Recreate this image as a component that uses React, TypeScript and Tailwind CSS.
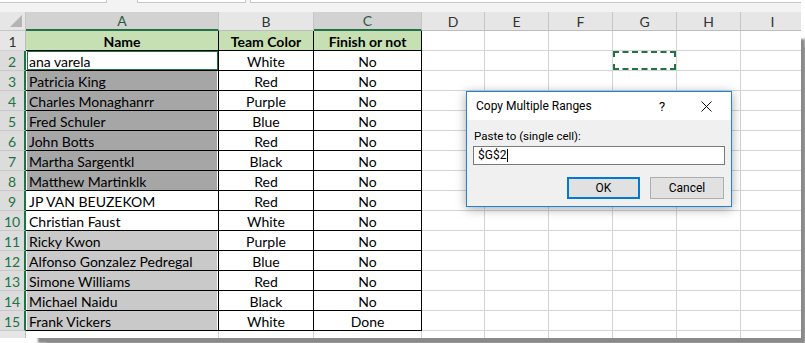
import React from "react";

type Row = { n: number; a: string; b: string; c: string };

const rows: Row[] = [
  { n: 1, a: "Name", b: "Team Color", c: "Finish or not" },
  { n: 2, a: "ana varela", b: "White", c: "No" },
  { n: 3, a: "Patricia King", b: "Red", c: "No" },
  { n: 4, a: "Charles Monaghanrr", b: "Purple", c: "No" },
  { n: 5, a: "Fred Schuler", b: "Blue", c: "No" },
  { n: 6, a: "John Botts", b: "Red", c: "No" },
  { n: 7, a: "Martha Sargentkl", b: "Black", c: "No" },
  { n: 8, a: "Matthew Martinklk", b: "Red", c: "No" },
  { n: 9, a: "JP VAN BEUZEKOM", b: "Red", c: "No" },
  { n: 10, a: "Christian Faust", b: "White", c: "No" },
  { n: 11, a: "Ricky Kwon", b: "Purple", c: "No" },
  { n: 12, a: "Alfonso Gonzalez Pedregal", b: "Blue", c: "No" },
  { n: 13, a: "Simone Williams", b: "Red", c: "No" },
  { n: 14, a: "Michael Naidu", b: "Black", c: "No" },
  { n: 15, a: "Frank Vickers", b: "White", c: "Done" },
];

const gridCols =
  "grid grid-rows-[minmax(0,1fr)] grid-cols-[26px_193px_95px_108px_63px_64px_64px_64px_64px_64px]";

function aFill(n: number): string {
  if (n >= 3 && n <= 8) return "bg-[#a6a6a6]";
  if (n >= 11 && n <= 15) return "bg-[#c9c9c9]";
  return "bg-white";
}

function ColHeader({ label, selected }: { label: string; selected?: boolean }) {
  return (
    <div
      className={
        selected
          ? "flex items-center justify-center bg-[#d2d2d2] text-[#2b5a3c] border-r border-r-[#c6c6c6] border-b-2 border-b-[#217346] text-[14px]"
          : "flex items-center justify-center bg-[#e6e6e6] text-[#333] border-r border-r-[#c6c6c6] border-b border-b-[#bdbdbd] text-[14px]"
      }
    >
      {label}
    </div>
  );
}

function EmptyCell({ marquee }: { marquee?: boolean }) {
  return (
    <div className="border-r border-b border-[#d4d4d4] bg-white relative">
      {marquee && (
        <div className="absolute left-0 top-0 right-0 bottom-0 border-2 border-dashed border-[#217346]" />
      )}
    </div>
  );
}

function DataRow({ r }: { r: Row }) {
  const header = r.n === 1;
  const rowHead = header
    ? "flex items-center justify-center pt-[2px] bg-[#e6e6e6] text-[#333] border-r border-r-[#bdbdbd] border-b border-b-[#d0d0d0] text-[14px]"
    : "flex items-center justify-center pt-[2px] bg-[#dcdcdc] text-[#217346] border-r-2 border-r-[#217346] border-b border-b-[#c8c8c8] text-[14px]";
  return (
    <div className={`${gridCols} h-[20px]`}>
      <div className={rowHead}>{r.n}</div>
      {header ? (
        <>
          <div className="flex items-center justify-center pt-[2px] bg-[#c6e0b4] font-bold border-r border-b border-black">
            {r.a}
          </div>
          <div className="flex items-center justify-center pt-[2px] bg-[#c6e0b4] font-bold border-r border-b border-black">
            {r.b}
          </div>
          <div className="flex items-center justify-center pt-[2px] bg-[#c6e0b4] font-bold border-r border-b border-black">
            {r.c}
          </div>
        </>
      ) : (
        <>
          <div className="border-r border-b border-black bg-white flex min-h-0">
            {r.n === 2 ? (
              <div className="flex-1 flex items-center pt-[1px] pl-[1px] ml-[1px] border border-[#217346]">
                {r.a}
              </div>
            ) : (
              <div className={`flex-1 flex items-center pt-[2px] pl-[2px] ml-[1px] mr-[1px] ${aFill(r.n)}`}>
                {r.a}
              </div>
            )}
          </div>
          <div className="flex items-center justify-center pt-[2px] border-r border-b border-black bg-white">
            {r.b}
          </div>
          <div className="flex items-center justify-center pt-[2px] border-r border-b border-black bg-white">
            {r.c}
          </div>
        </>
      )}
      <EmptyCell />
      <EmptyCell />
      <EmptyCell />
      <EmptyCell marquee={r.n === 2} />
      <EmptyCell />
      <EmptyCell />
    </div>
  );
}

function Dialog() {
  return (
    <div className="absolute left-[466px] top-[91px] w-[266px] h-[116px] border border-[#1f84d6] bg-[#f0f0f0] shadow-[0_2px_10px_rgba(0,0,0,0.35)] font-['Roboto',sans-serif] text-[11.5px] leading-[15px] text-black flex flex-col">
      <div className="h-[28px] bg-white flex items-center pl-[9px] pr-[10px]">
        <span className="flex-1 text-[12px]">Copy Multiple Ranges</span>
        <span className="w-[14px] text-center text-[13px] mr-[32px]">?</span>
        <svg width="11" height="11" viewBox="0 0 11 11" className="mr-[9px]">
          <path d="M0.5 0.5 L10.5 10.5 M10.5 0.5 L0.5 10.5" stroke="#111" strokeWidth="1" />
        </svg>
      </div>
      <div className="flex-1 flex flex-col px-[6px] pt-[9px]">
        <div className="h-[15px] leading-[15px] pl-[1px]">Paste to (single cell):</div>
        <div className="mt-[2px] h-[19px] w-[252px] border border-[#7a7a7a] bg-white flex items-center pl-[4px] text-[12px]">
          <span>$G$2</span>
          <span className="ml-[1px] w-[1px] h-[13px] bg-black" />
        </div>
        <div className="mt-[12px] flex justify-end gap-[10px] pr-[1px]">
          <button className="w-[73px] h-[22px] bg-[#e1e1e1] border-2 border-[#0078d7] text-[12px] flex items-center justify-center">
            OK
          </button>
          <button className="w-[74px] h-[22px] bg-[#e1e1e1] border border-[#adadad] text-[12px] flex items-center justify-center">
            Cancel
          </button>
        </div>
      </div>
    </div>
  );
}

export default function App() {
  return (
    <div className="w-[805px] h-[343px] bg-white relative overflow-hidden">
      <div className="w-[801px] h-[338px] bg-white relative overflow-hidden shadow-[21px_22px_2px_-17px_#8a8a8a,25px_26px_2px_-21px_#8a8a8a] font-['Lato',sans-serif] text-[14px] leading-[17px] text-black">
        {/* formula bar remnant */}
        <div className="h-[12px] bg-[#f3f3f3] relative">
          <div className="flex h-[3px]">
            <div className="w-[107px] bg-white border-r border-b border-[#c6c6c6]" />
            <div className="w-[30px]" />
            <div className="w-[109px] bg-white border-x border-b border-[#c6c6c6]" />
            <div className="w-[4px]" />
            <div className="flex-1 bg-white border-l border-b border-[#c6c6c6]" />
          </div>
        </div>
        {/* column headers */}
        <div className={`${gridCols} h-[19px]`}>
          <div className="bg-[#e6e6e6] border-r border-b border-[#c6c6c6] flex items-end justify-end pr-[3px] pb-[3px]">
            <svg width="12" height="12" viewBox="0 0 12 12">
              <polygon points="12,0 12,12 0,12" fill="#b4b4b4" />
            </svg>
          </div>
          <ColHeader label="A" selected />
          <ColHeader label="B" />
          <ColHeader label="C" selected />
          <ColHeader label="D" />
          <ColHeader label="E" />
          <ColHeader label="F" />
          <ColHeader label="G" />
          <ColHeader label="H" />
          <ColHeader label="I" />
        </div>
        {rows.map((r) => (
          <DataRow key={r.n} r={r} />
        ))}
        <div className={`${gridCols} h-[20px]`}>
          <div className="flex items-start justify-center bg-[#e6e6e6] text-[#333] border-r border-r-[#bdbdbd] text-[14px] pt-[3px]">
            16
          </div>
          <EmptyCell />
          <EmptyCell />
          <EmptyCell />
          <EmptyCell />
          <EmptyCell />
          <EmptyCell />
          <EmptyCell />
          <EmptyCell />
          <EmptyCell />
        </div>
        <Dialog />
      </div>
    </div>
  );
}
